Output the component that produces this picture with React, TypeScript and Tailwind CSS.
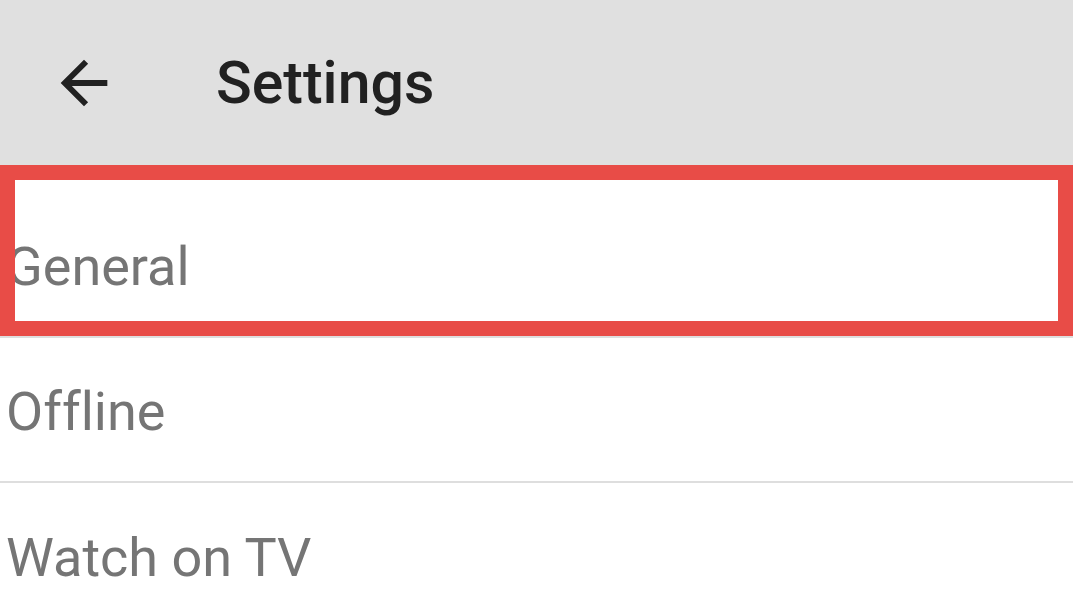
const rows = ["General", "Offline", "Watch on TV"]

function BackArrow() {
  return (
    <svg viewBox="0 0 24 24" width={70} height={70} fill="#212121">
      <path d="M20 11H7.83l5.59-5.59L12 4l-8 8 8 8 1.41-1.41L7.83 13H20v-2z" />
    </svg>
  )
}

export default function App() {
  return (
    <div className="w-[1073px] h-[604px] overflow-hidden bg-white font-['Roboto',sans-serif] [font-variant-ligatures:none]">
      <header className="h-[165px] bg-[#e0e0e0] flex items-center">
        <div className="ml-[49px] w-[70px] h-[70px]">
          <BackArrow />
        </div>
        <h1 className="ml-[97px] text-[59px] leading-none font-medium text-[#212121]">Settings</h1>
      </header>

      <div className="relative h-[171px]">
        <div className="pl-[6px] pt-[75px] text-[54px] leading-none text-[#757575]">{rows[0]}</div>
        <div className="absolute inset-0 border-[15px] border-[#e84c47]" />
      </div>
      <div className="h-[2px] bg-[#dedede]" />

      <div className="h-[143px] pl-[6px] pt-[47px] text-[54px] leading-none text-[#757575]">{rows[1]}</div>
      <div className="h-[2px] bg-[#dedede]" />

      <div className="h-[121px] pl-[6px] pt-[48px] text-[54px] leading-none text-[#757575]">{rows[2]}</div>
    </div>
  )
}
